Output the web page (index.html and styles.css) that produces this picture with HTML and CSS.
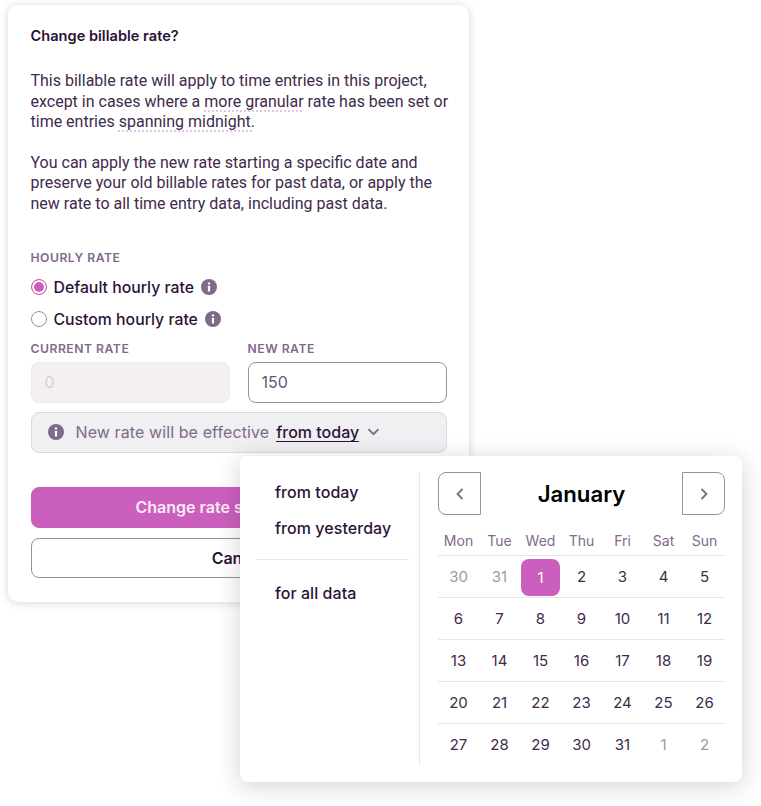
FILE: index.html
```html
<!DOCTYPE html>
<html lang="en">
<head>
<meta charset="UTF-8">
<title>Change billable rate</title>
<link rel="stylesheet" href="styles.css">
</head>
<body>
<div class="page">
  <div class="rate-card">
    <h2 class="card-title">Change billable rate?</h2>
    <p class="card-text">This billable rate will apply to time entries in this project, except in cases where a <span class="dotted">more granular</span> rate has been set or time entries <span class="dotted">spanning midnight.</span></p>
    <p class="card-text second">You can apply the new rate starting a specific date and preserve your old billable rates for past data, or apply the new rate to all time entry data, including past data.</p>

    <div class="field-label hourly">HOURLY RATE</div>
    <div class="radio-row">
      <span class="radio checked"></span>
      <span>Default hourly rate</span>
      <svg class="info" viewBox="0 0 16 16"><circle cx="8" cy="8" r="8"/><circle class="info-mark" cx="8" cy="4.4" r="1.2"/><rect class="info-mark" x="6.9" y="6.8" width="2.2" height="5.8" rx="0.4"/></svg>
    </div>
    <div class="radio-row">
      <span class="radio"></span>
      <span>Custom hourly rate</span>
      <svg class="info" viewBox="0 0 16 16"><circle cx="8" cy="8" r="8"/><circle class="info-mark" cx="8" cy="4.4" r="1.2"/><rect class="info-mark" x="6.9" y="6.8" width="2.2" height="5.8" rx="0.4"/></svg>
    </div>

    <div class="rate-fields">
      <div>
        <div class="field-label">CURRENT RATE</div>
        <div class="input disabled">0</div>
      </div>
      <div>
        <div class="field-label">NEW RATE</div>
        <div class="input">150</div>
      </div>
    </div>

    <div class="effective">
      <svg class="info" viewBox="0 0 16 16"><circle cx="8" cy="8" r="8"/><circle class="info-mark" cx="8" cy="4.4" r="1.2"/><rect class="info-mark" x="6.9" y="6.8" width="2.2" height="5.8" rx="0.4"/></svg>
      <span class="effective-text">New rate will be effective</span>
      <span class="effective-link">from today</span>
      <svg class="chevron" viewBox="0 0 12 8"><path d="M1 1.2 6 6.2l5-5"/></svg>
    </div>

    <div class="btn primary">Change rate starting today</div>
    <div class="btn secondary">Cancel</div>
  </div>

  <div class="date-popover">
    <div class="presets">
      <div class="preset">from today</div>
      <div class="preset">from yesterday</div>
      <div class="preset-line"></div>
      <div class="preset">for all data</div>
    </div>
    <div class="calendar">
      <div class="cal-head">
        <div class="nav-btn prev"><svg viewBox="0 0 8 12"><path d="M6.5 1 1.5 6l5 5"/></svg></div>
        <div class="month">January</div>
        <div class="nav-btn next"><svg viewBox="0 0 8 12"><path d="M1.5 1l5 5-5 5"/></svg></div>
      </div>
      <div class="week names"><span>Mon</span><span>Tue</span><span>Wed</span><span>Thu</span><span>Fri</span><span>Sat</span><span>Sun</span></div>
      <div class="week"><span class="muted">30</span><span class="muted">31</span><span class="today">1</span><span>2</span><span>3</span><span>4</span><span>5</span></div>
      <div class="week"><span>6</span><span>7</span><span>8</span><span>9</span><span>10</span><span>11</span><span>12</span></div>
      <div class="week"><span>13</span><span>14</span><span>15</span><span>16</span><span>17</span><span>18</span><span>19</span></div>
      <div class="week"><span>20</span><span>21</span><span>22</span><span>23</span><span>24</span><span>25</span><span>26</span></div>
      <div class="week"><span>27</span><span>28</span><span>29</span><span>30</span><span>31</span><span class="muted">1</span><span class="muted">2</span></div>
    </div>
  </div>
</div>
</body>
</html>
```

FILE: styles.css
```css
* {
  box-sizing: border-box;
}
body {
  margin: 0;
  background-color: #fff;
  font-family: Inter, "Liberation Sans", sans-serif;
  color: #2c1338;
}
.page {
  position: relative;
  width: 761px;
  height: 806px;
  padding: 5px 0 0 8px;
  overflow: hidden;
}
.rate-card {
  width: 461px;
  height: 597px;
  padding: 21px 20px 0 22.5px;
  background-color: #fff;
  border-radius: 10px;
  box-shadow: 0 1px 8px rgba(44,19,56,0.18);
}
.card-title {
  margin: 0 0 25px;
  font-size: 14.6px;
  line-height: 20px;
  font-weight: 600;
}
.card-text {
  margin: 0;
  font-family: Roboto, "Liberation Sans", sans-serif;
  font-size: 16px;
  line-height: 20.5px;
  color: #412a4c;
}
.card-text.second {
  margin-top: 20px;
}
.dotted {
  text-decoration: underline dotted #e3b4e4;
  text-underline-offset: 4px;
}
.field-label {
  font-size: 12.2px;
  line-height: 16px;
  font-weight: 600;
  letter-spacing: 0.5px;
  color: #7f6a8a;
}
.field-label.hourly {
  margin-top: 36px;
}
.radio-row {
  display: flex;
  align-items: center;
  gap: 7px;
  height: 32px;
  font-size: 15.8px;
  font-weight: 500;
}
.field-label.hourly + .radio-row {
  margin-top: 5px;
}
.radio {
  width: 16px;
  height: 16px;
  border: 1px solid #9c8ba4;
  border-radius: 50%;
  background-color: #fff;
}
.radio.checked {
  border-color: #cb5fbd;
  background-color: #cb5fbd;
  box-shadow: inset 0 0 0 2px #fff;
}
.info {
  display: block;
  width: 16px;
  height: 16px;
  fill: #7f6a8a;
}
.info-mark {
  fill: #fff;
}
.rate-fields {
  display: grid;
  grid-template-columns: 199px 199px;
  gap: 18px;
  margin-top: 6px;
}
.input {
  height: 40.5px;
  margin-top: 5px;
  padding: 0 13px;
  border: 1px solid #9c8ba4;
  border-radius: 8px;
  font-size: 16px;
  line-height: 39px;
  color: #6a5575;
}
.input.disabled {
  border-color: #eeeae9;
  background-color: #f3f0ef;
  color: #d5d0d2;
}
.effective {
  display: flex;
  align-items: center;
  width: 416px;
  height: 40.5px;
  margin-top: 9.5px;
  padding-left: 16px;
  background-color: #f0eff2;
  border: 1px solid #dcd9de;
  border-radius: 8px;
  font-size: 16px;
}
.effective-text {
  margin-left: 12px;
  letter-spacing: 0.1px;
  color: #7f6a8a;
}
.effective-link {
  margin-left: 7px;
  font-weight: 500;
  border-bottom: 1px solid #2c1338;
  line-height: 18px;
}
.chevron {
  width: 13px;
  height: 8px;
  margin-left: 8px;
  fill: none;
  stroke: #7f6a8a;
  stroke-width: 1.9;
}
.btn {
  width: 416px;
  height: 40.5px;
  border-radius: 8px;
  text-align: center;
  font-size: 16px;
  font-weight: 600;
  line-height: 38.5px;
}
.btn.primary {
  margin-top: 34.5px;
  background-color: #cb5fbd;
  border: 1px solid #cb5fbd;
  color: #fbeaf8;
}
.btn.secondary {
  margin-top: 10px;
  border: 1px solid #9c8ba4;
}
.date-popover {
  position: absolute;
  left: 240px;
  top: 456px;
  width: 502px;
  height: 326px;
  display: flex;
  padding: 16px 17px 0 16px;
  background-color: #fff;
  border-radius: 8px;
  box-shadow: 0 4px 24px rgba(44,19,56,0.2);
}
.presets {
  width: 165px;
  height: 293px;
  padding-right: 10px;
  padding-top: 1px;
  border-right: 1px solid #e8e5ea;
  box-sizing: content-box;
}
.preset {
  height: 36px;
  padding-left: 19px;
  font-size: 16px;
  font-weight: 500;
  letter-spacing: 0.05px;
  line-height: 38px;
}
.preset-line {
  height: 1px;
  margin: 14px 0 13.5px;
  background-color: #e8e5ea;
}
.calendar {
  width: 287px;
  margin-left: 18px;
}
.cal-head {
  display: flex;
  align-items: center;
  justify-content: space-between;
  height: 43px;
}
.nav-btn {
  display: flex;
  align-items: center;
  justify-content: center;
  width: 43px;
  height: 43px;
  border: 1px solid #9c8ba4;
}
.nav-btn.prev {
  border-radius: 8px 0 0 8px;
}
.nav-btn.next {
  border-radius: 0 8px 8px 0;
}
.nav-btn svg {
  width: 8px;
  height: 12px;
  fill: none;
  stroke: #7f6a8a;
  stroke-width: 1.8;
}
.month {
  font-size: 22.2px;
  font-weight: 600;
  color: #000;
}
.week {
  display: grid;
  grid-template-columns: repeat(7, 41px);
  height: 42px;
  border-bottom: 1px solid #e8e5ea;
  font-size: 15px;
  line-height: 42px;
  text-align: center;
  color: #412a4c;
}
.week:last-child {
  border-bottom: none;
}
.week.names {
  height: 41px;
  font-size: 14px;
  line-height: 52px;
  color: #7f6a8a;
}
.muted {
  color: #a595ac;
}
.week .today {
  align-self: center;
  justify-self: center;
  width: 39px;
  height: 37px;
  line-height: 37px;
  border-radius: 8px;
  background-color: #cb5fbd;
  color: #fff;
}
```
